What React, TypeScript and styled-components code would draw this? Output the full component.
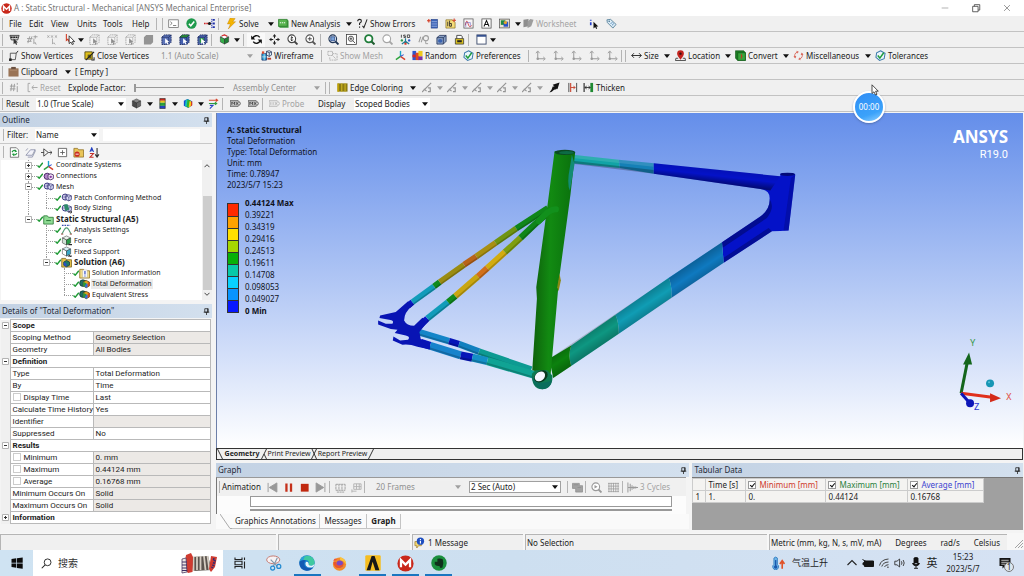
import React from "react";
import styled, { createGlobalStyle, css } from "styled-components";

const ui = '"Noto Sans", "Open Sans", "Noto Sans CJK SC", sans-serif';
const grid = 'Roboto, "Noto Sans", sans-serif';

const Global = createGlobalStyle`
  * { box-sizing: border-box; }
  html, body { margin: 0; padding: 0; }
  body { background: #f0f0f0; color: #1c1c1c; font: 8px/10px ${ui}; }
  button, select, input { font: inherit; color: inherit; margin: 0; }
`;

/* ---------- shell ---------- */

const Page = styled.div`
  display: flex;
  flex-direction: column;
  min-height: 100vh;
  position: relative;
  overflow: hidden;
`;

const TitleBar = styled.header`
  display: flex;
  align-items: center;
  height: 16px;
  padding: 0 3px 0 1px;
  gap: 2px;
  background: #fff;
  color: #777;
`;

const TitleText = styled.h1`
  flex: 1;
  margin: 0;
  font-size: 8px;
  font-weight: 400;
  white-space: nowrap;
`;

const WindowButton = styled.button`
  display: flex;
  align-items: center;
  justify-content: center;
  width: 29px;
  height: 15px;
  padding: 0;
  border: 0;
  background: none;
  color: #555;
`;

const Bars = styled.div`
  display: flex;
  flex-direction: column;
`;

const Bar = styled.div`
  display: flex;
  align-items: center;
  height: 16px;
  padding-left: 2px;
  border-bottom: 1px solid #c2c2c2;
  background: #f0f0f0;
  white-space: nowrap;
`;

const Grip = styled.span<{ $w: number }>`
  flex: none;
  width: ${(p) => p.$w}px;
  height: 12px;
  border-left: 1px solid #b4b4b4;
`;

const Gap = styled.span<{ $w: number }>`
  flex: none;
  width: ${(p) => p.$w}px;
`;

const Tool = styled.button<{ $w: number; $off?: boolean; $on?: boolean }>`
  flex: none;
  display: flex;
  align-items: center;
  gap: 2px;
  width: ${(p) => p.$w}px;
  height: 14px;
  padding: 0;
  border: 0;
  background: ${(p) => (p.$on ? "#f9f9f9" : "none")};
  color: ${(p) => (p.$off ? "#a3a3a3" : "#1c1c1c")};
  white-space: nowrap;
`;

const IconTool = styled(Tool)`
  justify-content: center;
`;

const BarLabel = styled.label<{ $w: number }>`
  flex: none;
  width: ${(p) => p.$w}px;
`;

const Combo = styled.span<{ $w: number; $white?: boolean; $border?: boolean }>`
  flex: none;
  position: relative;
  display: flex;
  align-items: center;
  width: ${(p) => p.$w}px;
  height: 12px;
  background: ${(p) => (p.$white ? "#fff" : "#efefef")};
  border: ${(p) => (p.$border ? "1px solid #a0a0a0" : "0")};
  svg {
    position: absolute;
    right: 2px;
    pointer-events: none;
  }
`;

const Select = styled.select<{ $off?: boolean }>`
  appearance: none;
  width: 100%;
  height: 100%;
  padding: 0 10px 0 1px;
  border: 0;
  background: none;
  opacity: 1;
  color: ${(p) => (p.$off ? "#8f8f8f" : "#1c1c1c")};
`;

const Range = styled.input`
  flex: none;
  appearance: none;
  width: 90px;
  height: 8px;
  margin-right: 8px;
  background: linear-gradient(#999, #999) center / 100% 1px no-repeat;
  &::-webkit-slider-thumb {
    appearance: none;
    width: 2px;
    height: 8px;
    background: #999;
  }
`;

/* ---------- icons ---------- */

const Svg = styled.svg<{ $s?: number }>`
  flex: none;
  display: block;
  width: ${(p) => p.$s ?? 11}px;
  height: ${(p) => p.$s ?? 11}px;
`;

const Caret = ({ off }: { off?: boolean }) => (
  <Svg $s={6} viewBox="0 0 6 6">
    <path d="M0 1.2H6L3 5Z" fill={off ? "#a0a0a0" : "#111"} />
  </Svg>
);

const cube = (a: string, b: string, c: string) => (
  <>
    <path d="M6 1 10.5 3.2 6 5.4 1.5 3.2Z" fill={a} stroke="#222" strokeWidth=".5" />
    <path d="M1.5 3.2 6 5.4V11L1.5 8.6Z" fill={b} stroke="#222" strokeWidth=".5" />
    <path d="M10.5 3.2 6 5.4V11L10.5 8.6Z" fill={c} stroke="#222" strokeWidth=".5" />
  </>
);

const selBox = (edge: string, fill: string) => (
  <>
    <path d="M1 3.5 3.5 1H11V9L8.5 11.5H1Z" fill={fill} stroke={edge} strokeDasharray="2 .6" />
    <path d="M1 3.5H8.5V11M8.5 3.5 11 1" fill="none" stroke={edge} strokeWidth=".8" />
    <path d="M4.5 4.5V10.5L6 9.2 7 11.6 8.2 11 7.1 8.7H9Z" fill={edge === "#a8a8a8" ? "#8e8e8e" : "#fff"} />
  </>
);

const lens = (stroke: string, inner?: React.ReactNode) => (
  <>
    <circle cx="5.2" cy="5.2" r="4.2" fill="#fff" stroke={stroke} strokeWidth="1.2" />
    <path d="M8.2 8.2 11.4 11.4" stroke={stroke} strokeWidth="2" />
    {inner}
  </>
);

const contour = (
  <>
    <path d="M2 3 6 1 11 3.5V8L7 11 2 8.5Z" fill="#1550d0" />
    <path d="M4 2.2 6.8 1.3 8.2 3.6 5 9.8 3.2 9Z" fill="#17c0c0" />
    <path d="M6 1.5 9.5 3 7.5 10.6 5 9.7Z" fill="#2fb52f" />
    <path d="M8.2 3.5 10 3.2 9.8 8.6 7.2 10.7Z" fill="#f3cf1c" />
    <path d="M10 4 11.2 3.6V8L9.6 9.2Z" fill="#e23a1c" />
  </>
);

const axis = (
  <>
    <path d="M6 7V1" stroke="#19a3c9" strokeWidth="1.5" />
    <path d="M6 7 1 10.5" stroke="#2aa33a" strokeWidth="1.5" />
    <path d="M6 7 11 10.5" stroke="#d6402a" strokeWidth="1.5" />
    <path d="M6 7 9.5 5" stroke="#2b4bd0" strokeWidth="1.1" />
  </>
);

const tick = <path d="M3 6 5.3 8.8 9.5 3" fill="none" stroke="#1f9c3c" strokeWidth="1.6" />;

const coord = (
  <>
    <path d="M3 2V9.5H10.5" fill="none" stroke="#9a9a9a" strokeWidth="1.1" />
    <path d="M1 3.5 3 1 5 3.5M9 7.6 11.2 9.5 9 11.4" fill="none" stroke="#9a9a9a" strokeWidth="1" />
    <circle cx="3" cy="9.5" r="1.4" fill="#9a9a9a" />
  </>
);

const meshed = (
  <>
    <circle cx="4.6" cy="5.5" r="3.3" fill="#e6e6fa" stroke="#33307c" strokeWidth="1" />
    <path d="M1.4 5.5H8M4.6 2.2V8.8" stroke="#33307c" strokeWidth=".6" />
    <path d="M5.5 4.2 8.5 3 11.3 4.2V8.2L8.5 9.7 5.5 8.2Z" fill="#d9dcf7" stroke="#29286c" strokeWidth=".8" />
    <path d="M5.5 4.2 8.5 5.6 11.3 4.2M8.5 5.6V9.7" fill="none" stroke="#29286c" strokeWidth=".6" />
  </>
);

const icons: Record<string, React.ReactNode> = {
  mech: (
    <>
      <circle cx="6" cy="6" r="5.7" fill="#c9281b" />
      <path d="M2.8 8.7V3.6L6 6.8 9.2 3.6V8.7" fill="none" stroke="#fff" strokeWidth="1.6" />
    </>
  ),
  console: (
    <>
      <rect x=".8" y="2" width="10.4" height="8.4" fill="#fff" stroke="#666" strokeWidth=".8" />
      <path d="M2.5 4 4.5 5.8 2.5 7.6M5.5 8.2H9" fill="none" stroke="#555" strokeWidth=".8" />
    </>
  ),
  ok: (
    <>
      <circle cx="6" cy="6" r="5.6" fill="#1f9a4c" />
      <path d="M3.2 6.2 5.2 8.4 9 3.8" fill="none" stroke="#fff" strokeWidth="1.7" />
    </>
  ),
  nodes: (
    <>
      <path d="M0 6H5" stroke="#d02a2a" strokeWidth="1.6" strokeDasharray="1.8 .7" />
      <path d="M8.5 1V11" stroke="#2233aa" strokeWidth="1" strokeDasharray="1.4 .8" />
      <path d="M9.4 1H11.8V3H9.4ZM9.4 5H11.8V7H9.4ZM9.4 9H11.8V11H9.4Z" fill="#2233aa" />
      <circle cx="6" cy="6" r="1.7" fill="#111" />
    </>
  ),
  bolt: <path d="M4.5 0 10 .6 7.5 4H10.5L2.5 12 4.8 6.5H1.5Z" fill="#f4b400" stroke="#b97700" strokeWidth=".4" />,
  analysis: (
    <>
      <path d="M.5 1.5H10L11.5 3V10.5H2L.5 9Z" fill="#3d9a3f" />
      <path d="M.5 1.5H10V9H.5Z" fill="#58b44f" stroke="#27702a" strokeWidth=".6" />
      <path d="M2 5.2H8.5" stroke="#fff" strokeDasharray="1.4 .8" />
    </>
  ),
  errors: (
    <>
      <path d="M.8 3.5Q.8 1.5 2.8 1.5 4.8 1.5 4.8 3.3 4.8 4.7 2.8 5.8V7.5M2.8 9.2V10.7" fill="none" stroke="#222" strokeWidth="1.2" />
      <path d="M6 8.6 7.5 10.5 11 1.5" fill="none" stroke="#222" strokeWidth="1.1" />
    </>
  ),
  chartIn: (
    <>
      <rect x="4.5" y="1.5" width="7" height="9.5" fill="#3c64b8" stroke="#223c80" strokeWidth=".6" />
      <path d="M5 4H11M5 6.5H11M5 9H11" stroke="#c9d7f5" strokeWidth=".6" />
      <path d="M0 3H4M2 1V5" stroke="#d2371f" strokeWidth="1.2" />
    </>
  ),
  label: (
    <>
      <path d="M1 2H8L11 5V11H1Z" fill="#f5dc7b" stroke="#7c6416" strokeWidth=".7" />
      <path d="M3 9V4M5 9V3M5 6H7V9H5" fill="none" stroke="#222" strokeWidth=".9" />
      <path d="M8 2.5H12M10 .5V4.5" stroke="#d2371f" strokeWidth="1" />
    </>
  ),
  sheetChart: (
    <>
      <rect x="1" y="1" width="10" height="10" fill="#f6f3f6" stroke="#555" strokeWidth=".8" />
      <path d="M2.5 8Q4 0 5.5 6T9.5 8" fill="none" stroke="#d23a3a" strokeWidth=".9" />
      <path d="M3 10V5H8V9" fill="none" stroke="#5b57bb" strokeWidth=".6" />
    </>
  ),
  letterA: (
    <>
      <rect x="1" y="1" width="10" height="10" fill="#fff" stroke="#444" strokeWidth=".8" />
      <path d="M3.2 9.2 6 2.8 8.8 9.2M4.3 7H7.7" fill="none" stroke="#111" strokeWidth="1.1" />
    </>
  ),
  picture: (
    <>
      <rect x=".6" y="1.2" width="10.8" height="9.6" fill="#e9e4d2" stroke="#555" strokeWidth=".8" />
      <path d="M2 2.5H7V7.5H2Z" fill="#1f8b3f" />
      <path d="M5 4H10V9.5H5Z" fill="#2a53c9" />
      <circle cx="7" cy="5" r="1.8" fill="#e8a32a" />
    </>
  ),
  worksheet: (
    <>
      <path d="M.5 2 6 1V9L.5 10Z" fill="#8e8e8e" />
      <path d="M5 4 8 1 11.5 2 9 9 5 11Z" fill="#9d9d9d" />
    </>
  ),
  info: (
    <>
      <path d="M3 4.5V8M3 1.8V3" stroke="#2340cc" strokeWidth="1.8" />
      <path d="M6 4V11.5L7.8 9.8 9 12 10 11.4 9 9.3H11.3Z" fill="#111" />
    </>
  ),
  tag: (
    <>
      <path d="M1 2 5 1.5 11 7 7.5 11 1.5 5Z" fill="#dcebf5" stroke="#4a7894" strokeWidth=".9" />
      <circle cx="3.5" cy="3.6" r=".9" fill="#4a7894" />
      <path d="M5 6.5 7 4.5M6.5 8 8.6 6" stroke="#3f7fb5" strokeWidth=".9" />
    </>
  ),
  named: (
    <>
      <path d="M1 1.5H11L9.5 6.5H2.5Z" fill="#ccc" stroke="#222" strokeWidth=".8" />
      <path d="M2 3.5H10" stroke="#222" strokeWidth="1.8" strokeDasharray="2 .6" />
      <path d="M5 5V11.2L6.6 9.9 7.8 12 8.9 11.3 7.8 9.3H9.8Z" fill="#333" />
    </>
  ),
  named2: <path d="M0 5H6M0 8H5M3 2.5 1 10M5.5 2.5 3.5 8M7 3H11.5M9 1.5V5M7.5 5V10.5L8.8 9.2 10 11.5" fill="none" stroke="#9d9d9d" strokeWidth="1" />,
  named3: <path d="M.5 1.5 2.5 4M2.5 1.5.5 4M4.5 1.5 6.5 4M6.5 1.5 4.5 4M8.5 1.5 11 4M11 1.5 8.5 4M6 5V11L7.5 9.5 9 11.5" fill="none" stroke="#a0a0a0" strokeWidth=".9" />,
  pick: (
    <>
      <path d="M1.5 0V7L3.2 5.7 4.5 8.5" fill="none" stroke="#d0402a" strokeWidth="1.2" />
      <path d="M4.5 2V10.5L6.5 8.8 8 11.7 9.2 11 8 8.3H10.5Z" fill="#fff" stroke="#222" strokeWidth=".9" />
    </>
  ),
  selOff: selBox("#a8a8a8", "#f5f5f5"),
  bodyOff: <path d="M1 3.5 3.5 1H11V9L8.5 11.5H1Z" fill="#949494" />,
  selBlue: selBox("#1c2c63", "#5d74b8"),
  selGreen: (
    <>
      {selBox("#1c2c63", "#4560b0")}
      <path d="M1 3.5 3.5 1H11L8.5 3.5Z" fill="#2a8f3d" stroke="#173d2c" strokeWidth=".5" />
    </>
  ),
  selTeal: (
    <>
      {selBox("#1c2c63", "#4d65ac")}
      <path d="M3 4.5H7.5V9.5H3Z" fill="#2d9a45" />
      <path d="M4.5 4.5V10.5L6 9.2 7 11.6 8.2 11 7.1 8.7H9Z" fill="#fff" />
    </>
  ),
  extend: (
    <>
      {cube("#fff", "#35b04c", "#1e7e34")}
      <path d="M3 2 6 1 9 2.5" fill="none" stroke="#d33" strokeWidth="1.2" />
    </>
  ),
  rotate: (
    <>
      <path d="M2 5A4.2 4.2 0 0 1 9.5 3.6M10 7A4.2 4.2 0 0 1 2.5 8.4" fill="none" stroke="#111" strokeWidth="1.5" />
      <path d="M.2 1.5V6H4.8ZM11.8 10.5V6H7.2Z" fill="#111" />
    </>
  ),
  pan: (
    <>
      <path d="M6 2V4.6M6 7.4V10M2 6H4.6M7.4 6H10" stroke="#222" strokeWidth="1.1" />
      <path d="M6 0 8 2.7H4ZM6 12 8 9.3H4ZM0 6 2.7 4V8ZM12 6 9.3 4V8Z" fill="#222" />
    </>
  ),
  zoomFit: lens("#444", <path d="M5.2 3V7.4M4 4.2 5.2 3 6.4 4.2M4 6.2 5.2 7.4 6.4 6.2" fill="none" stroke="#222" strokeWidth="1" />),
  zoomIn: lens("#555", <path d="M5.2 3V7.4M3 5.2H7.4" stroke="#444" strokeWidth="1" />),
  zoomBox: lens("#1f3556", <path d="M3 3H7.4V7.4H3Z" fill="#7aa3d8" stroke="#1d3d80" strokeWidth=".8" />),
  zoomRect: (
    <>
      <rect x=".5" y=".5" width="11" height="11" fill="#fff" stroke="#333" strokeWidth=".8" />
      <circle cx="5.4" cy="5.2" r="2.8" fill="none" stroke="#333" strokeWidth=".9" />
      <path d="M5.4 3.7V6.7M3.9 5.2H6.9M7.5 7.4 10 10" stroke="#333" strokeWidth=".9" />
    </>
  ),
  zoomGreen: (
    <>
      <circle cx="5.2" cy="5.2" r="4" fill="#fff" stroke="#1f7d3a" strokeWidth="2" />
      <path d="M8.2 8.2 11.4 11.4" stroke="#1f5d30" strokeWidth="2.2" />
    </>
  ),
  zoomOff: lens("#a6a6a6"),
  iso: (
    <>
      <path d="M1.5 .8V4M6 1.2H4V2.4H6V3.8H4M8 1H10.5V3.8H8Z" fill="none" stroke="#333" strokeWidth=".9" />
      <path d="M6 8V4.5M6 8 2 11M6 8 10 11" stroke="#1b7f97" strokeWidth="1.3" />
      <circle cx="2" cy="7" r="1.3" fill="#2a9a46" />
      <circle cx="10" cy="7" r="1.3" fill="#2c54c9" />
      <circle cx="6" cy="10.5" r="1.3" fill="#d33b2a" />
    </>
  ),
  look: (
    <>
      <path d="M1 9 3 3M3.5 9 5.5 3" stroke="#9c9c9c" strokeWidth="1.1" />
      <circle cx="8.6" cy="4.6" r="2.8" fill="none" stroke="#9c9c9c" strokeWidth="1.2" />
      <path d="M8.4 7V10.5H11" fill="none" stroke="#9c9c9c" />
    </>
  ),
  box3d: (
    <>
      <path d="M1 4 4 1.5H11V8L8 11H1Z" fill="#8aa0c4" stroke="#24365e" strokeWidth=".9" />
      <path d="M1 4H8V11M8 4 11 1.5" fill="none" stroke="#24365e" strokeWidth=".9" />
      <ellipse cx="4.6" cy="7.5" rx="2.4" ry="2" fill="#3a62b0" />
    </>
  ),
  lock: (
    <>
      <path d="M3 5V1.5H8L9 3V5" fill="#fff" stroke="#444" strokeWidth="1" />
      <path d="M1.5 5H10.5V11H1.5Z" fill="#d9c020" stroke="#333" strokeWidth=".8" />
      <path d="M3.5 6.8H8.5V9H3.5Z" fill="#222" />
    </>
  ),
  win: (
    <>
      <rect x="1" y="1" width="10" height="10" fill="#fff" stroke="#3b4a6b" />
      <path d="M1 2H11" stroke="#34508f" strokeWidth="2" />
    </>
  ),
  vertex: (
    <>
      <path d="M2.5 3.5H9L8 10.5H2.5Z" fill="none" stroke="#444" strokeWidth=".9" />
      <path d="M9 3.5 11 1" stroke="#222" strokeWidth="1" />
      <path d="M1.2 9.2H4V12H1.2Z" fill="#222" />
    </>
  ),
  closeVertex: (
    <>
      <path d="M1 2H9V10H1Z" fill="#e0c01c" stroke="#4a4110" strokeWidth=".9" />
      <path d="M4 5H8V9H4Z" fill="#5b5720" />
      <path d="M2 11 11 2M8 11H11V8" fill="none" stroke="#222" strokeWidth="1.1" />
    </>
  ),
  wire: (
    <>
      <path d="M1 4H6V11H1Z" fill="#2d9fd4" stroke="#1e3b70" strokeWidth=".9" />
      <path d="M1 1.5H3.5V4H1Z" fill="#e04a2c" />
      <path d="M6 1.5 9 .8 11.5 2V5.5L9 7 6 5.5ZM6 1.5 9 3 11.5 2M9 3V7" fill="#d8ecf7" stroke="#1f2e55" strokeWidth=".8" />
      <path d="M3.5 4V11M1 7.5H6" stroke="#fff" strokeWidth=".6" />
      <path d="M7 9.5H11" stroke="#b8402e" strokeWidth="2" />
    </>
  ),
  meshOff: <path d="M1 1.5H6V6H1ZM6 4H11V8M3 8V11H8M6 6 10 10M8 11H11V8" fill="none" stroke="#ababab" strokeWidth=".9" strokeDasharray="1.8 .7" />,
  axis,
  random: (
    <>
      <path d="M.5 1H4.5V11H.5Z" fill="#2b55cf" />
      <path d="M4 3H8V11H4Z" fill="#e2481f" />
      <path d="M7 1H11.5V7H7Z" fill="#efc81d" />
      <path d="M7 7H11.5V11H7Z" fill="#7d2fa6" />
      <path d="M.5 5H4V8H.5Z" fill="#d2262d" />
    </>
  ),
  prefs: (
    <>
      <path d="M6 .8 11 3.5 10 9.5 5 11.3 1 8 1.8 3Z" fill="#eaf4fb" stroke="#3a79ab" strokeWidth="1.1" />
      {tick}
    </>
  ),
  coord,
  size: <path d="M.8 6H11.2M3.2 3.5.8 6 3.2 8.5M8.8 3.5 11.2 6 8.8 8.5" fill="none" stroke="#222" strokeWidth="1" />,
  pin: (
    <>
      <path d="M1 9H3.5M8.5 9H11L11.5 11.5H.5L1 9" fill="none" stroke="#333" strokeWidth=".9" />
      <path d="M6 10.5Q2.3 6 2.3 4A3.7 3.7 0 0 1 9.7 4Q9.7 6 6 10.5Z" fill="#c4241e" />
      <circle cx="6" cy="4" r="1.3" fill="#3a0f0d" />
    </>
  ),
  convert: (
    <>
      <path d="M.5.8H9.5L11.5 3V11.5H3L.5 9Z" fill="#1b7b22" stroke="#0f4f15" strokeWidth=".6" />
      <path d="M3 3H11.3V11.3H3Z" fill="#36a63c" stroke="#0f4f15" strokeWidth=".6" />
      <path d="M7 4.5V9.5M7 6 8.4 7" stroke="#c4381f" strokeWidth="1" />
    </>
  ),
  misc: (
    <>
      <path d="M4.5 2.2A4.5 4.5 0 0 0 2.4 8.6M7.5 9.8A4.5 4.5 0 0 0 9.6 3.4" fill="none" stroke="#d96a5d" strokeWidth="1" />
      <path d="M3.8.8 6.4 2 4.3 4ZM8.2 11.2 5.6 10 7.7 8ZM.5 6.5H3.6L2.4 9.3ZM11.5 5.5H8.4L9.6 2.7Z" fill="#d96a5d" />
    </>
  ),
  clip: (
    <>
      <path d="M.5 2.5H11.5V11.5H.5Z" fill="#9a7456" />
      <path d="M3.5 1H8.5V3.5H3.5Z" fill="#6b5140" />
      <path d="M2 4.5H10" stroke="#b8957a" strokeWidth=".8" />
    </>
  ),
  hash: <path d="M1 4.5H7M1 7.5H7M3 2 2 10M6 2 5 10M9 1V3M9 4.5V11" stroke="#999" strokeWidth="1" />,
  reset: <path d="M3.5 1.5H1.2V10.5H3.5M11.5 6H5.5M7.5 3.8 5.2 6 7.5 8.2" fill="none" stroke="#a5a5a5" strokeWidth="1" />,
  edge: (
    <>
      <path d="M.5 1.5H11.5V10.5H.5Z" fill="#8c7b12" />
      <path d="M4.6 1.5H5.8V10.5H4.6ZM8.2 1.5H9.4V10.5H8.2Z" fill="#cdb624" />
      <path d="M.5 1.5H2V10.5H.5Z" fill="#c9a800" />
    </>
  ),
  slash: <path d="M0 11 10 1M2 7.5 5 10M6.5 6.5H9V10.5H6.5" fill="none" stroke="#959595" strokeWidth="1.3" />,
  probeArrow: <path d="M.5 11.5 3 8 4 5 7.5 4.5 11 1 8 8 5.5 8.5 3 10.5ZM4 3 11.5.5 9.2 8Z" fill="#111" />,
  thinA: (
    <>
      <path d="M2 1V11M10.5 1V11" stroke="#444" strokeWidth="1" />
      <path d="M4 1V11" stroke="#c8442f" strokeWidth="1.2" />
      <path d="M4 6H9M7 4.5 9 6 7 7.5" fill="none" stroke="#c8442f" strokeWidth="1" />
    </>
  ),
  thicken: (
    <>
      <path d="M1.2 1V11" stroke="#222" strokeWidth="1.2" />
      <path d="M9.5 1V11" stroke="#1f8a32" strokeWidth="3" />
      <path d="M2 6H8M4 4.5 2 6 4 7.5M6 4.5 8 6 6 7.5" fill="none" stroke="#222" strokeWidth=".9" />
    </>
  ),
  cubeDark: cube("#888", "#4a4a4a", "#666"),
  bands: (
    <>
      <path d="M3 .5H9V3H3Z" fill="#c8281b" />
      <path d="M3 3H9V5.2H3Z" fill="#e7c51c" />
      <path d="M3 5.2H9V8.6H3Z" fill="#2aa03c" />
      <path d="M3 8.6H9V11.5H3Z" fill="#2442c0" />
      <path d="M3 .5H9V11.5H3Z" fill="none" stroke="#222" strokeWidth=".6" />
    </>
  ),
  contour,
  vectors: (
    <>
      <path d="M1 2.5H10M8.5 1 10.5 2.5 8.5 4" fill="none" stroke="#d8472e" strokeWidth="1.2" />
      <path d="M1 6H9M7.5 4.5 9.5 6 7.5 7.5" fill="none" stroke="#2f9d3f" strokeWidth="1.2" />
      <path d="M2 11.5 5.5 8H2" fill="none" stroke="#2945c5" strokeWidth="1.2" />
    </>
  ),
  max: (
    <>
      <path d="M0 3H9L11.8 6 9 9H0Z" fill="#ccc" stroke="#333" strokeWidth=".8" />
      <path d="M2 7.5V4.5L3.5 6 5 4.5V7.5M6.5 4.5 9 7.5M9 4.5 6.5 7.5" fill="none" stroke="#222" strokeWidth=".8" />
    </>
  ),
  probe: (
    <>
      <path d="M0 3H9L11.8 6 9 9H0Z" fill="#eee" stroke="#a5a5a5" strokeWidth=".8" />
      <path d="M2 4.5V7.5M4.5 4.5V7.5M6.5 4.5 9 7.5M9 4.5 6.5 7.5" fill="none" stroke="#a5a5a5" strokeWidth=".8" />
    </>
  ),
  refresh: (
    <>
      <path d="M1.5.8H8L10.5 3.3V11.2H1.5Z" fill="#fff" stroke="#555" strokeWidth=".8" />
      <path d="M3.3 5.5Q5 2.8 7.5 4.2M8.6 6.8Q7 9.6 4.3 8.2" fill="none" stroke="#1f9a3d" strokeWidth="1.4" />
      <path d="M6.6 2.6 9 4.8 6.2 5.6ZM5.4 9.8 3 7.6 5.8 6.8Z" fill="#1f9a3d" />
    </>
  ),
  erase: <path d="M1 9 6 3H11L8 9ZM3 11H8L11 5V3M1 4 3 1.5" fill="#f2f2fa" stroke="#8a8fa8" strokeWidth=".9" />,
  filter: <path d="M0 6H3M3 2V10L8 6ZM8 6H12M10 4 12 6 10 8" fill="none" stroke="#333" strokeWidth=".9" />,
  plusBox: <path d="M1.5 1.5H10.5V10.5H1.5ZM6 3.5V8.5M3.5 6H8.5" fill="#fff" stroke="#555" strokeWidth=".9" />,
  folderNo: (
    <>
      <path d="M1 1.5H5L6 3H11.5V11H1Z" fill="#e9c558" stroke="#8b6a1b" strokeWidth=".8" />
      <circle cx="4.5" cy="7.8" r="2.8" fill="#c92c22" />
      <path d="M2.8 7.8H6.2" stroke="#fff" strokeWidth="1" />
    </>
  ),
  sort: (
    <>
      <path d="M1 5.3 3 .8 5 5.3M1.8 4H4.2" fill="none" stroke="#2340c0" strokeWidth="1.1" />
      <path d="M1 7H5L1 11.3H5" fill="none" stroke="#c4302a" strokeWidth="1.1" />
      <path d="M8.8 1V10M6.8 8 8.8 11 10.8 8" fill="none" stroke="#333" strokeWidth="1.2" />
    </>
  ),
  connect: (
    <>
      <circle cx="4.6" cy="5.8" r="3.4" fill="#b387c9" stroke="#432460" strokeWidth="1" />
      <path d="M5.5 4.2 8.5 3 11.3 4.2V8.2L8.5 9.7 5.5 8.2Z" fill="#efe4f5" stroke="#432460" strokeWidth=".9" />
      <circle cx="8.4" cy="6.4" r="1.3" fill="#8a3aa8" />
    </>
  ),
  meshed,
  sizing: (
    <>
      {meshed}
      <path d="M3 2 7 1 9 7 5 9Z" fill="#2d8a6a" />
      <path d="M8 10H12M10.5 8.5 12 10 10.5 11.5" fill="none" stroke="#222" strokeWidth=".9" />
    </>
  ),
  greenFolder: (
    <>
      <path d="M.8 2H4.8L6 3.6H11.2V11H.8Z" fill="#8fdc94" stroke="#2d7a38" strokeWidth=".9" />
      <path d="M3.5 7.2H8.5" stroke="#1f6b2c" strokeWidth="1" />
    </>
  ),
  settings: (
    <>
      <path d="M1 1.5H10" stroke="#3a4fae" strokeWidth="1.4" strokeDasharray="1.8 1" />
      <path d="M1 11 4 5.5Q6 3 8 5.5L11 11" fill="none" stroke="#4f9a72" strokeWidth="1.2" />
      <path d="M0 11H2.5M9.5 11H12" stroke="#a0463c" strokeWidth="1" />
    </>
  ),
  force: (
    <>
      {cube("#e9f3ec", "#cfe0d5", "#2b9c4a")}
      <path d="M8 10.5H12" stroke="#222" strokeWidth="1.3" />
    </>
  ),
  support: (
    <>
      {cube("#d8f0f7", "#fff", "#39a7c6")}
      <path d="M7.5 11H12M8.5 9.8 10.8 11.8" stroke="#222" strokeWidth="1" />
    </>
  ),
  solution: (
    <>
      <path d="M.8 1.5H5L6 3H11.5V11H.8Z" fill="#e4c24a" stroke="#735a12" strokeWidth=".8" />
      <path d="M3 5.5 6 3.8 9.3 5.5V9L6 10.6 3 9Z" fill="#1d7b66" stroke="#16313e" strokeWidth=".8" />
      <path d="M3 5.5 6 7V10.6L3 9Z" fill="#2b50c2" />
    </>
  ),
  solInfo: (
    <>
      <path d="M.8 1.5H5L6 3H11.5V11H.8Z" fill="#f0dc88" stroke="#8a6b18" strokeWidth=".8" />
      <path d="M4 2.2H9V10.2H4Z" fill="#fff" stroke="#999" strokeWidth=".4" />
      <path d="M6.5 3.2V7M6.5 8.2V9.4" stroke="#2340c0" strokeWidth="1.2" />
    </>
  ),
  result: (
    <>
      <circle cx="4.3" cy="5.6" r="3.6" fill="#1d6f68" stroke="#153a2a" strokeWidth=".8" />
      <path d="M4.6 4 7.8 2.6 11.4 4.4V8.6L8 10.6 4.6 8.6Z" fill="#e2a21f" stroke="#543d10" strokeWidth=".8" />
      <path d="M4.6 4 8 5.8V10.6L4.6 8.6Z" fill="#2a9a3c" />
      <path d="M6 9.4 8 10.6 9.5 9.7V6.5L8 6Z" fill="#3a6ad8" />
      <path d="M9.6 5V9.6L11.4 8.6V4.4Z" fill="#d6481f" />
    </>
  ),
  first: <path d="M1.2 1V11M10.8 1 2.5 6 10.8 11Z" fill="#989898" stroke="#989898" strokeWidth="1" />,
  pause: <path d="M2.5 1.5H5V10.5H2.5ZM7.5 1.5H10V10.5H7.5Z" fill="#c5301a" />,
  stop: <path d="M2 2H10.5V10.5H2Z" fill="#c1280f" />,
  last: <path d="M10.8 1V11M1.2 1 9.5 6 1.2 11Z" fill="#989898" stroke="#989898" strokeWidth="1" />,
  frames: <path d="M1 2.5H11M1 2.5V9M4.3 2.5V9M7.6 2.5V9M11 2.5V9M1 9H11M2 11H10" fill="none" stroke="#9c9c9c" strokeWidth="1" strokeDasharray="2.4 .5" />,
  frames2: <path d="M3 2H11V8H3ZM6 2V8M9 2V8M3 5H11M1 10H6M1 8V11.5" fill="none" stroke="#b2b2b2" strokeWidth="1" />,
  export: <path d="M.5 1.5H8V4H11.5V11H4V7H.5ZM2 3H6.5M6 6H10" fill="#a2a2a2" stroke="#8c8c8c" strokeWidth=".8" />,
  zoomPlay: lens("#999", <path d="M3.8 3.2 7.2 5.2 3.8 7.2Z" fill="#999" />),
  gridIc: <path d="M1 1V11M3.5 1V11M6 1V11M8.5 1V11M11 1V11M0 1.5H12M0 4.5H12M0 7.5H12M0 10.5H12" stroke="#9a9a9a" strokeWidth=".8" />,
  cycles: <path d="M1 .5V11.5M1 6H12M3.5 2V10M5.5 3.5V8.5M7.5 4.5V7.5M9.5 5V7" stroke="#9a9a9a" strokeWidth="1.1" />,
  message: (
    <>
      <path d="M1 5H8V9.5H5L3 12V9.5H1Z" fill="#f2d877" stroke="#96741b" strokeWidth=".7" />
      <circle cx="7" cy="4.5" r="4" fill="#1f4fc0" />
      <path d="M7 2.2V3.3M7 4V7" stroke="#fff" strokeWidth="1.2" />
    </>
  ),
  start: <path d="M.5 2 5.3 1.3V5.7H.5ZM6 1.2 11.7.4V5.7H6ZM.5 6.4H5.3V10.8L.5 10.1ZM6 6.4H11.7V11.7L6 10.9Z" fill="#0b0b0b" />,
  search: (
    <>
      <circle cx="7.2" cy="4.7" r="3.7" fill="none" stroke="#222" strokeWidth="1" />
      <path d="M4.5 7.4.8 11.2" stroke="#222" strokeWidth="1.1" />
    </>
  ),
  taskview: <path d="M1 .5V2.5H8V.5M1 11.5V9.5H8V11.5M1 4.3H8V7.7H1ZM10.5 .5V3M10.5 4.5V11.5" fill="none" stroke="#222" strokeWidth="1.1" />,
  snip: (
    <>
      <ellipse cx="5.4" cy="3.6" rx="4.9" ry="2.9" fill="#f7f2f4" stroke="#c4756c" strokeWidth=".7" />
      <path d="M8.5 2 5.5 8.5M3.5 3.5 8.5 8.5" stroke="#8298aa" strokeWidth=".9" />
      <circle cx="5" cy="9.8" r="1.5" fill="none" stroke="#2189d0" strokeWidth=".9" />
      <circle cx="9.6" cy="8.6" r="1.5" fill="none" stroke="#2189d0" strokeWidth=".9" />
    </>
  ),
  edgeApp: (
    <>
      <circle cx="6" cy="6" r="5.8" fill="#1b7fd0" />
      <path d="M.4 5A5.8 5.8 0 0 1 11.7 5Q12 8 9 8 7 8 7.4 6.4 7.6 4 5 3.8 2 3.6.4 5Z" fill="#3fc9a0" />
      <path d="M.4 5Q1.5 1 5.5.5 3 2 3.5 4Z" fill="#2a9ddc" />
      <path d="M.3 5Q2.5 3 5 4Q3 6 4.5 8.5 6.5 11 10.5 9.3 8.5 12 5 11.7 0 10.5.3 5Z" fill="#1459b3" />
      <path d="M5.2 5.2Q6.8 4.6 7.2 6.2 6.8 8.2 9.5 8 11 7.8 11.6 6.6 11.5 8 10.6 9 7 10.2 5.2 8 4.4 6.4 5.2 5.2Z" fill="#e8f4fb" />
    </>
  ),
  firefox: (
    <>
      <circle cx="6" cy="6.4" r="5.3" fill="#f38b2a" />
      <path d="M6.5.5Q11.5 2.5 11.4 7 9.5 3.5 6.5 3.6Z" fill="#fbc53c" />
      <path d="M1 4Q2 1.5 3 2.2L4.5 3Z" fill="#ef5a3a" />
      <circle cx="6.2" cy="6.4" r="2.8" fill="#7d4ac0" />
      <path d="M1 5Q2 11 7 9.2 9.6 8 9 5.5 8 8 5.4 7.5 3 7 3.4 4.6Z" fill="#e9552e" />
    </>
  ),
  ansysApp: (
    <>
      <rect x=".2" y=".2" width="11.6" height="11.6" rx="1" fill="#f5bd20" />
      <path d="M1.2 11.5 5 .8H7.2L10.8 11.5H7.8L5.7 5 4 11.5Z" fill="#171717" />
    </>
  ),
  evernote: (
    <>
      <circle cx="6" cy="6" r="5.8" fill="#1b8f3e" />
      <path d="M2.8 5H4.8V2.8Q7 2.2 8.8 3.2 9.8 6 8.6 9.4 6.4 10.4 6.4 8.2 3.6 8.6 2.8 7Z" fill="#10301c" />
    </>
  ),
  weather: (
    <>
      <path d="M2.5 1.8Q4 0 5.5 1.8V7.2Q7 8.2 6.4 10 5.8 11.8 4 11.8 2.2 11.8 1.6 10 1 8.2 2.5 7.2Z" fill="#6fb4e8" stroke="#2c78bd" strokeWidth=".7" />
      <path d="M4 3.5V9" stroke="#1a58ae" strokeWidth="1.2" />
      <circle cx="4" cy="9.4" r="1.5" fill="#1a58ae" />
      <path d="M9.6 11V4.5M7.6 6.8 9.6 4 11.6 6.8" fill="none" stroke="#e0532a" strokeWidth="1.4" />
    </>
  ),
  up: <path d="M1.5 8 6 3.5 10.5 8" fill="none" stroke="#222" strokeWidth="1.1" />,
  battery: <path d="M2.5 4H11.5V9.5H2.5ZM1 5.8H2.5V7.8H1ZM.5 2.5 4 4.5" fill="#151515" stroke="#151515" strokeWidth="1" />,
  wifi: <path d="M1.5 8.5Q3 2.5 10.5 2M3.8 9.5Q5 5.3 10.5 5M6.5 10Q7.3 7.8 10.5 7.7M9 10.2H10.8" fill="none" stroke="#444" strokeWidth="1" />,
  sound: <path d="M.8 4.2H3L5.6 2V10L3 7.8H.8ZM7.4 4.3Q8.6 6 7.4 7.7M9.2 3Q11.2 6 9.2 9" fill="none" stroke="#333" strokeWidth=".9" />,
  mic: <path d="M4 1Q6 0 8 1V6.5Q6 8.2 4 6.5ZM2.5 6Q3 8.8 6 8.8 9 8.8 9.5 6M6 9V11.3M4 11.3H8" fill="#111" stroke="#111" strokeWidth=".9" />,
  notes: (
    <>
      <path d="M.5 1H11.5V9H6L3.5 11.5V9H.5Z" fill="#151515" />
      <path d="M2.3 3.3H9.7M2.3 5.3H9.7M2.3 7.2H6" stroke="#fff" strokeWidth=".7" />
    </>
  ),
  min: <path d="M2 6H10" stroke="#999" strokeWidth=".9" />,
  restore: <path d="M2 4H8.5V10.5H2ZM4 4V2H10.5V8.5H8.5" fill="none" stroke="#444" strokeWidth="1" />,
  close: <path d="M2.5 2.5 9.5 9.5M9.5 2.5 2.5 9.5" stroke="#777" strokeWidth=".9" />,
};

const Icon = ({ n, s }: { n: string; s?: number }) => (
  <Svg $s={s} viewBox="0 0 12 12" aria-hidden="true">
    {icons[n]}
  </Svg>
);

const Ic = ({ n, w = 18, on }: { n: string; w?: number; on?: boolean }) => (
  <IconTool type="button" aria-label={n} $w={w} $on={on}>
    <Icon n={n} />
  </IconTool>
);

const Drop = ({ w = 12, off }: { w?: number; off?: boolean }) => (
  <IconTool type="button" aria-label="More" $w={w}>
    <Caret off={off} />
  </IconTool>
);

const Txt = ({ n, w, off, children }: { n?: string; w: number; off?: boolean; children: React.ReactNode }) => (
  <Tool type="button" $w={w} $off={off}>
    {n && <Icon n={n} />}
    {children}
  </Tool>
);

type PickProps = { label: string; value: string; w: number; off?: boolean; border?: boolean; id?: string };
const Pick = ({ label, value, w, off, border, id }: PickProps) => (
  <Combo $w={w} $white={!off} $border={border}>
    <Select id={id} aria-label={label} $off={off} defaultValue={value}>
      <option>{value}</option>
    </Select>
    <Caret off={off} />
  </Combo>
);

/* ---------- work area ---------- */

const Work = styled.main`
  flex: 1;
  display: grid;
  grid-template-columns: 212px minmax(0, 1fr);
  gap: 4px;
  padding: 1px 1px 3px 0;
  background: #f4f4f4;
`;

const Side = styled.aside`
  display: flex;
  flex-direction: column;
  gap: 4px;
`;

const Panel = styled.section`
  display: flex;
  flex-direction: column;
  min-width: 0;
`;

const PanelHead = styled.h2`
  flex: none;
  display: flex;
  align-items: center;
  justify-content: space-between;
  height: 14px;
  margin: 0;
  padding: 0 2px 0 2px;
  background: linear-gradient(90deg, #c3d2e4, #d3e0ee);
  color: #1f2a38;
  font-size: 8px;
  font-weight: 400;
`;

const Head = ({ children }: { children: React.ReactNode }) => (
  <PanelHead>
    {children}
    <Svg $s={7} viewBox="0 0 10 10">
      <path d="M2.5 1H7.5V6H2.5ZM1 6H9M5 6V10M6.4 1V6" fill="none" stroke="#222" strokeWidth="1.1" />
    </Svg>
  </PanelHead>
);

const FilterBar = styled.div`
  display: flex;
  align-items: center;
  height: 17px;
  padding-left: 3px;
  border-bottom: 1px solid #c8c8c8;
`;

const IconBar = styled(FilterBar)`
  height: 16px;
  border-bottom: 0;
`;

const FilterInput = styled.input`
  width: 97px;
  height: 12px;
  margin-left: 4px;
  padding: 0 2px;
  border: 0;
  background: #fff;
`;

const TreeBox = styled.div`
  flex: none;
  display: flex;
  height: 140px;
  margin-left: 1px;
  background: #fff;
`;

const TreeList = styled.ul`
  flex: 1;
  display: flex;
  flex-direction: column;
  margin: 0;
  padding: 0 0 0 18px;
  list-style: none;
`;

const Node = styled.li<{ $bold?: boolean }>`
  flex: 1 1 0;
  display: flex;
  align-items: center;
  min-height: 0;
  font-size: ${(p) => (p.$bold ? 8 : 7)}px;
  font-weight: ${(p) => (p.$bold ? 700 : 400)};
  white-space: nowrap;
`;

const NodeText = styled.span<{ $sel?: boolean }>`
  padding: 0 1px;
  background: ${(p) => (p.$sel ? "#ebebeb" : "none")};
`;

const NodeIcon = styled.span`
  display: flex;
  align-items: center;
  width: 18px;
  height: 10px;
`;

const Guide = styled.span<{ $kind: string }>`
  align-self: stretch;
  position: relative;
  display: flex;
  align-items: center;
  width: 18px;
  padding-left: 6px;
  &::before {
    content: "";
    position: absolute;
    left: 9px;
    top: 0;
    height: ${(p) => (p.$kind === "l" ? "50%" : "100%")};
    border-left: ${(p) => (p.$kind === " " ? "0" : "1px dotted #9a9a9a")};
  }
  &::after {
    content: "";
    position: absolute;
    left: 9px;
    right: 0;
    top: 50%;
    border-top: ${(p) => (p.$kind === " " || p.$kind === "v" ? "0" : "1px dotted #9a9a9a")};
  }
`;

const Expander = styled.button`
  position: relative;
  z-index: 1;
  display: flex;
  width: 7px;
  height: 7px;
  padding: 0;
  border: 0;
  background: #fff;
`;

const Expand = ({ open }: { open: boolean }) => (
  <Expander type="button" aria-label={open ? "Collapse" : "Expand"}>
    <Svg $s={7} viewBox="0 0 7 7">
      <path d="M.5.5H6.5V6.5H.5Z" fill="#fff" stroke="#aaa" strokeWidth=".9" />
      <path d={open ? "M2 3.5H5" : "M2 3.5H5M3.5 2V5"} stroke="#333" strokeWidth="1" />
    </Svg>
  </Expander>
);

const Scroll = styled.div`
  display: flex;
  flex-direction: column;
  align-items: center;
  justify-content: space-between;
  width: 10px;
  padding: 3px 0;
  background: #f0f0f0;
`;

const Thumb = styled.div`
  width: 9px;
  height: 94px;
  margin-top: 25px;
  background: #cdcdcd;
`;

type TreeRow = { g: string; open?: boolean; icon: string; text: string; bold?: boolean; sel?: boolean };
const tree: TreeRow[] = [
  { g: "t", open: false, icon: "axis", text: "Coordinate Systems" },
  { g: "t", open: false, icon: "connect", text: "Connections" },
  { g: "t", open: true, icon: "meshed", text: "Mesh" },
  { g: "vt", icon: "meshed", text: "Patch Conforming Method" },
  { g: "vl", icon: "sizing", text: "Body Sizing" },
  { g: "l", open: true, icon: "greenFolder", text: "Static Structural (A5)", bold: true },
  { g: " t", icon: "settings", text: "Analysis Settings" },
  { g: " t", icon: "force", text: "Force" },
  { g: " t", icon: "support", text: "Fixed Support" },
  { g: " l", open: true, icon: "solution", text: "Solution (A6)", bold: true },
  { g: "  t", icon: "solInfo", text: "Solution Information" },
  { g: "  t", icon: "result", text: "Total Deformation", sel: true },
  { g: "  l", icon: "result", text: "Equivalent Stress" },
];

const Outline = () => (
  <Panel>
    <Head>Outline</Head>
    <FilterBar>
      <Grip $w={4} />
      <BarLabel $w={28} htmlFor="filter">Filter:</BarLabel>
      <Pick id="filter" label="Filter" value="Name" w={64} />
      <FilterInput aria-label="Filter text" />
    </FilterBar>
    <IconBar>
      <Grip $w={3} />
      {["refresh", "erase", "filter", "plusBox", "folderNo", "sort"].map((n) => (
        <Ic key={n} n={n} w={16} />
      ))}
    </IconBar>
    <TreeBox>
      <TreeList>
        {tree.map((r) => (
          <Node key={r.text} $bold={r.bold}>
            {r.g.split("").map((k, i) => (
              <Guide key={i} $kind={k}>
                {i === r.g.length - 1 && r.open !== undefined && <Expand open={r.open} />}
              </Guide>
            ))}
            <NodeIcon>
              <Svg $s={6} viewBox="0 0 6 6">
                <path d="M.5 3.5 2.2 5.2 5.8.8" fill="none" stroke="#1e9a35" strokeWidth="1.4" />
              </Svg>
              <Icon n={r.icon} />
            </NodeIcon>
            <NodeText $sel={r.sel}>{r.text}</NodeText>
          </Node>
        ))}
      </TreeList>
      <Scroll>
        <Svg $s={6} viewBox="0 0 6 6"><path d="M.5 4.2 3 1.7 5.5 4.2" fill="none" stroke="#444" /></Svg>
        <Thumb />
        <Svg $s={6} viewBox="0 0 6 6"><path d="M.5 1.8 3 4.3 5.5 1.8" fill="none" stroke="#444" /></Svg>
      </Scroll>
    </TreeBox>
  </Panel>
);

const DetailsTable = styled.table`
  width: 210px;
  margin: 1px 0 0 1px;
  border-collapse: collapse;
  table-layout: fixed;
  background: #fff;
  font-family: ${grid};
`;

const Gutter = styled.td`
  width: 9px;
  padding: 0;
  background: #f0f0f0;
  button { margin: 0 auto; }
`;

const cell = css`
  height: 12px;
  padding: 0 2px;
  border: 1px solid #b9b9b9;
  text-align: left;
  font-weight: 400;
  line-height: 10px;
  white-space: nowrap;
`;

const GroupCell = styled.th`
  ${cell}
  font-weight: 700;
`;

const NameCell = styled.th`
  ${cell}
  width: 83px;
`;

const ValueCell = styled.td<{ $ro?: boolean }>`
  ${cell}
  background: ${(p) => (p.$ro ? "#ece9e6" : "#fff")};
`;

const Tick = styled.input`
  appearance: none;
  position: relative;
  width: 8px;
  height: 8px;
  margin: 0 3px 0 0;
  border: 1px solid #ccc;
  background: #fff;
  vertical-align: middle;
  &:checked { border-color: #999; }
  &:checked::after {
    content: "";
    position: absolute;
    left: 2px;
    top: 0;
    width: 2px;
    height: 4px;
    border: solid #111;
    border-width: 0 1px 1px 0;
    transform: rotate(40deg);
  }
`;

type Detail = { group?: string; closed?: boolean; name?: string; value?: string; ro?: boolean; tick?: boolean };
const details: Detail[] = [
  { group: "Scope" },
  { name: "Scoping Method", value: "Geometry Selection", ro: true },
  { name: "Geometry", value: "All Bodies", ro: true },
  { group: "Definition" },
  { name: "Type", value: "Total Deformation" },
  { name: "By", value: "Time" },
  { name: "Display Time", value: "Last", tick: true },
  { name: "Calculate Time History", value: "Yes" },
  { name: "Identifier", value: "", ro: true },
  { name: "Suppressed", value: "No" },
  { group: "Results" },
  { name: "Minimum", value: "0. mm", ro: true, tick: true },
  { name: "Maximum", value: "0.44124 mm", ro: true, tick: true },
  { name: "Average", value: "0.16768 mm", ro: true, tick: true },
  { name: "Minimum Occurs On", value: "Solid", ro: true },
  { name: "Maximum Occurs On", value: "Solid", ro: true },
  { group: "Information", closed: true },
];

const Details = () => (
  <Panel>
    <Head>Details of "Total Deformation"</Head>
    <DetailsTable>
      <colgroup>
        <col style={{ width: 9 }} />
        <col style={{ width: 83 }} />
        <col />
      </colgroup>
      <tbody>
        {details.map((d) =>
          d.group ? (
            <tr key={d.group}>
              <Gutter><Expand open={!d.closed} /></Gutter>
              <GroupCell colSpan={2} scope="colgroup">{d.group}</GroupCell>
            </tr>
          ) : (
            <tr key={d.name}>
              <Gutter />
              <NameCell scope="row">
                {d.tick ? <label><Tick type="checkbox" />{d.name}</label> : d.name}
              </NameCell>
              <ValueCell $ro={d.ro}>{d.value}</ValueCell>
            </tr>
          )
        )}
      </tbody>
    </DetailsTable>
  </Panel>
);

const Center = styled.div`
  display: flex;
  flex-direction: column;
  min-width: 0;
`;

const Viewport = styled.section`
  flex: 1;
  position: relative;
  min-height: 334px;
  padding: 11px 10px;
  border-left: 1px solid #6d7fa8;
  background: linear-gradient(#648eea, #b3c8f5 52%, #fff);
  color: #10131c;
`;

const Scene = styled.svg`
  position: absolute;
  inset: 0;
  width: 100%;
  height: 100%;
`;

const Caption = styled.div`
  position: relative;
  line-height: 11px;
  p { margin: 0; }
`;

const Legend = styled.div`
  position: relative;
  display: flex;
  align-items: flex-start;
  gap: 6px;
  margin-top: 7px;
`;

const Swatches = styled.div`
  width: 12px;
  margin-top: 6px;
  border: 1px solid #333;
`;

const Swatch = styled.div<{ $c: string }>`
  height: 12px;
  background: ${(p) => p.$c};
  border-top: 1px solid #333;
  &:first-child { border-top: 0; }
`;

const LegendValues = styled.ol`
  margin: 0;
  padding: 0;
  list-style: none;
  li { height: 12px; line-height: 12px; }
  li:first-child, li:last-child { font-weight: 700; }
`;

const Brand = styled.div`
  position: absolute;
  top: 13px;
  right: 15px;
  color: #fff;
  text-align: right;
  strong { display: block; font: 700 17px/22px ${ui}; }
  span { display: block; font: 11px/14px ${grid}; }
`;

const scale = ["#ff2a00", "#ffa200", "#ffe000", "#a6d600", "#08b008", "#08c9a8", "#08d0ff", "#0894ff", "#0818ff"];
const values = ["0.44124 Max", "0.39221", "0.34319", "0.29416", "0.24513", "0.19611", "0.14708", "0.098053", "0.049027", "0 Min"];

const Tube = ({ pts, colors, w }: { pts: number[][]; colors: string[]; w: number }) => (
  <>
    {colors.map((c, i) => (
      <path key={c + i} d={`M${pts[i]}L${pts[i + 1]}`} stroke={c} strokeWidth={w} fill="none" />
    ))}
    <path
      d={`M${pts.map((p) => p.join(" ")).join("L")}`}
      stroke="#000"
      strokeOpacity=".2"
      strokeWidth={w / 4}
      transform={`translate(2 ${w / 2.8})`}
      fill="none"
    />
  </>
);

const Frame = () => (
  <Scene viewBox="216 113 807 334" aria-label="Bicycle frame deformation plot">
    <defs>
      <linearGradient id="seat" x1="0" x2="1" y1="0" y2="0.08">
        <stop offset="0" stopColor="#0d5a0a" />
        <stop offset=".45" stopColor="#128a12" />
        <stop offset="1" stopColor="#0a6f0d" />
      </linearGradient>
      <linearGradient id="shade" gradientUnits="userSpaceOnUse" x1="820" y1="460" x2="858" y2="518">
        <stop offset="0" stopColor="#000" stopOpacity=".22" />
        <stop offset=".45" stopColor="#000" stopOpacity=".02" />
        <stop offset="1" stopColor="#000" stopOpacity=".28" />
      </linearGradient>
      <linearGradient id="shadeTop" gradientUnits="userSpaceOnUse" x1="960" y1="74" x2="955" y2="118">
        <stop offset="0" stopColor="#000" stopOpacity=".1" />
        <stop offset=".5" stopColor="#000" stopOpacity="0" />
        <stop offset="1" stopColor="#000" stopOpacity=".4" />
      </linearGradient>
    </defs>
    <g transform="translate(370 140) scale(.3333)">
      {/* top tube */}
      <path d="M606 42 745 57 748 82 606 68Z" fill="#12a3a6" />
      <path d="M745 57 850 68 850 99 748 82Z" fill="#1580b6" />
      <path d="M606 42 850 68 850 78 606 52Z" fill="#fff" opacity=".12" />
      <path d="M606 60 850 88V99L606 69Z" fill="#000" opacity=".25" />
      {/* head tube and its joints */}
      <path d="M850 68 1230 107V99Q1252 94 1275 101L1255 270Q1230 272 1205 272L1060 367 1055 305 1170 228Q1200 205 1198 175 1200 150 1170 145L850 99Z" fill="#0412c8" />
      <path d="M850 68 1230 107 1200 150 1170 145 850 99Z" fill="url(#shadeTop)" />
      <path d="M1055 305 1170 228Q1200 205 1198 175 1215 200 1190 232L1057 322Z" fill="#020763" opacity=".55" />
      <path d="M1205 272 1060 367V352L1195 262Z" fill="#020763" opacity=".5" />
      <path d="M1262 112 1275 103 1255 270H1240Z" fill="#020a8c" opacity=".5" />
      <ellipse cx="1252" cy="101" rx="22" ry="5" fill="#020a78" />
      {/* down tube */}
      <path d="M1055 305 1060 367 903 472Q905 435 895 412Z" fill="#0f7cc4" />
      <path d="M895 412Q905 435 903 472L745 580Q745 545 735 523Z" fill="#10a0b8" />
      <path d="M735 523Q745 545 745 580L602 677Q592 645 602 615Z" fill="#0e9a84" />
      <path d="M602 615Q592 645 602 677L548 713 536 655Z" fill="#0c840e" />
      <path d="M1055 305 1060 367 548 713 536 655Z" fill="url(#shade)" />
      {/* chain stays */}
      <Tube w={20} pts={[[140, 574], [235, 602], [265, 611], [325, 634], [482, 688]]} colors={["#1485c8", "#0716b8", "#1280bf", "#0d9a92"]} />
      <Tube w={24} pts={[[150, 607], [178, 616], [270, 645], [305, 652], [350, 662], [492, 704]]} colors={["#0a18c4", "#1783cc", "#0716b8", "#148fc6", "#10a394"]} />
      {/* seat stays, far side then near side */}
      <Tube w={18} pts={[[112, 496], [125, 485], [190, 438], [207, 425], [280, 373], [317, 348], [375, 307], [437, 264], [532, 202]]} colors={["#0a18c4", "#129cba", "#0f8a1c", "#9a8c12", "#b8641a", "#a88f12", "#6f9410", "#0f861a"]} />
      <Tube w={19} pts={[[130, 572], [170, 534], [232, 485], [254, 467], [322, 408], [350, 383], [403, 335], [450, 292], [505, 240], [545, 207]]} colors={["#0a18c4", "#129cba", "#0f8a1c", "#c9a610", "#d2701a", "#d2ac10", "#7f9e10", "#0f861a", "#0f861a"]} />
      {/* dropouts */}
      <path d="M28 525 75 515 112 482 126 495Q100 515 100 540 108 556 130 556L155 532 170 545 146 575 150 596 178 606V627L140 619Q115 610 95 613L66 600 68 588 88 600 112 598Q120 588 105 585L72 578 80 568 60 566 22 552V540L45 550H65Q72 540 55 538L26 533Z" fill="#0814b4" />
      {/* seat tube */}
      <path d="M552 32 530 200 497 440 499 475 485 690 540 705 565 420 600 160 614 34Z" fill="url(#seat)" />
      <path d="M604 42 612 70 598 150Q588 130 598 80Z" fill="#128c74" />
      <path d="M567 400 571 420 564 452 560 440Z" fill="#8a8a14" />
      <ellipse cx="583" cy="35" rx="31" ry="8" fill="#0a4a22" />
      <ellipse cx="588" cy="36" rx="22" ry="5" fill="#0c6b45" />
      <path d="M505 242Q535 205 556 206" fill="none" stroke="#12901c" strokeWidth="18" strokeLinecap="round" />
      {/* bottom bracket */}
      <path d="M484 700Q482 745 515 747 546 744 546 706L530 690H495Z" fill="#0d7a52" />
      <path d="M484 706Q500 740 545 720 540 746 515 747 486 742 484 706Z" fill="#0a6e5c" />
      <ellipse cx="511" cy="708" rx="22" ry="16" transform="rotate(-35 511 708)" fill="#06381c" />
      <ellipse cx="508" cy="708" rx="17" ry="13" transform="rotate(-40 508 708)" fill="#f4f7ff" />
    </g>
    {/* orientation triad */}
    <path d="M961 393 967 363" stroke="#14661c" strokeWidth="3" />
    <path d="M969 352 972 364H963Z" fill="#14661c" />
    <path d="M961 393 992 397" stroke="#e0301c" strokeWidth="3" />
    <path d="M1001 398 990 402V393Z" fill="#d42a18" />
    <path d="M961 393 969 402" stroke="#0c16b8" strokeWidth="3" />
    <circle cx="970" cy="403" r="4" fill="#0c16b8" />
    <circle cx="990" cy="383" r="4" fill="#1796b4" />
    <circle cx="989" cy="382" r="1" fill="#5cc3d8" />
    <g fontFamily="Roboto, sans-serif" fontSize="9">
      <text x="970" y="346" fill="#3d9a50">Y</text>
      <text x="1006" y="400" fill="#e05a50">X</text>
      <text x="974" y="410" fill="#2a36d0">Z</text>
    </g>
  </Scene>
);

const ViewTabs = styled.div`
  display: flex;
  align-items: stretch;
  height: 12px;
  border: 1px solid #333;
  background: #f0f0f0;
`;

const ViewTab = styled.button<{ $w: number; $on?: boolean }>`
  display: flex;
  align-items: center;
  justify-content: center;
  width: ${(p) => p.$w}px;
  padding: 0;
  border: 0;
  background: none;
  font-weight: ${(p) => (p.$on ? 700 : 400)};
  font-size: 7px;
  white-space: nowrap;
`;

const Slant = ({ d }: { d: string }) => (
  <svg width="6" height="10" viewBox="0 0 6 10" aria-hidden="true">
    <path d={d} fill="none" stroke="#222" strokeWidth=".9" />
  </svg>
);

const Lower = styled.div`
  display: grid;
  grid-template-columns: minmax(0, 474fr) minmax(0, 331fr);
  gap: 3px;
  margin-top: 3px;
  height: 67px;
`;

const GraphBody = styled.div`
  display: flex;
  flex-direction: column;
  height: 37px;
  margin-right: 3px;
  border-left: 1px solid #777;
  border-top: 1px solid #999;
  background: #fcfcfc;
`;

const GraphTools = styled(Bar)`
  height: 18px;
  border: 0;
  overflow: hidden;
`;

const Track = styled.div`
  height: 11px;
  margin: 0 14px 0 33px;
  border: 1px solid #999;
  background: #fff;
`;

const TrackLine = styled.div`
  height: 2px;
  margin: 2px 14px 0 33px;
  background: #999;
`;

const LowerTabs = styled.div`
  display: flex;
  height: 15px;
  padding-left: 4px;
  background: #fafafa;
`;

const LowerTab = styled(ViewTab)`
  font-size: 8px;
  border-right: 1px solid #c4c4c4;
  border-bottom: 1px solid #c4c4c4;
`;

const Tabular = styled.div`
  flex: 1;
  border-top: 1px solid #777;
  background: #a0a0a0;
`;

const DataTable = styled.table`
  border-collapse: collapse;
  table-layout: fixed;
  width: 291px;
  background: #f4f3f1;
  th, td {
    height: 12px;
    padding: 0 2px;
    border: 1px solid #ccc;
    font-weight: 400;
    text-align: left;
    white-space: nowrap;
    line-height: 10px;
  }
`;

const ColHead = styled.th<{ $c?: string }>`
  color: ${(p) => p.$c ?? "#222"};
`;

const columns = [
  { name: "Minimum [mm]", c: "#cf3a2c", v: "0." },
  { name: "Maximum [mm]", c: "#27803a", v: "0.44124" },
  { name: "Average [mm]", c: "#3a3fd0", v: "0.16768" },
];

/* ---------- bottom bars ---------- */

const Status = styled.footer`
  display: grid;
  grid-template-columns: 276px 132px 111px 1fr 238px 15px;
  gap: 2px;
  height: 17px;
  padding-top: 1px;
  background: #f7f7f7;
`;

const StatusCell = styled.div`
  display: flex;
  align-items: center;
  gap: 3px;
  padding-left: 1px;
  border: 1px solid #b5b5b5;
  border-width: 1px 0 0 1px;
  background: #f0f0f0;
  white-space: nowrap;
`;

const Units = styled(StatusCell)`
  justify-content: space-between;
  padding-right: 7px;
`;

const Taskbar = styled.nav`
  display: flex;
  align-items: stretch;
  height: 26px;
  background: linear-gradient(90deg, #cfe3f2, #cddff0 50%, #d6e2f3);
`;

const TaskButton = styled.button<{ $w?: number; $run?: boolean }>`
  display: flex;
  align-items: center;
  justify-content: center;
  width: ${(p) => p.$w ?? 33}px;
  padding: 0;
  border: 0;
  background: ${(p) =>
    p.$run ? "linear-gradient(#1a76c0, #1a76c0) center bottom / 27px 2px no-repeat" : "none"};
`;

const InputMode = styled(TaskButton)`
  font-size: 11px;
`;

const SearchBox = styled.label`
  display: flex;
  align-items: center;
  gap: 6px;
  width: 190px;
  padding: 0 5px 0 8px;
  background: #fff;
  input {
    flex: 1;
    min-width: 0;
    padding: 0;
    border: 0;
    background: none;
    font-size: 10px;
    line-height: 14px;
  }
  input::placeholder { color: #333; opacity: 1; }
`;

const Spacer = styled.div`
  flex: 1;
`;

const Weather = styled.button`
  display: flex;
  align-items: center;
  gap: 7px;
  width: 71px;
  padding: 0;
  border: 0;
  background: none;
  font-size: 9px;
  white-space: nowrap;
`;

const Clock = styled.time`
  display: flex;
  flex-direction: column;
  justify-content: center;
  width: 46px;
  text-align: center;
  line-height: 12px;
`;

const Notify = styled(TaskButton)`
  position: relative;
`;

const Count = styled.span`
  position: absolute;
  left: 18px;
  top: 12px;
  width: 10px;
  height: 10px;
  border: 1px solid #777;
  border-radius: 50%;
  background: #dfe6ef;
  line-height: 8px;
`;

const Accordion = () => (
  <svg width="37" height="21" viewBox="0 0 37 21" aria-hidden="true">
    <path d="M10 4 27 3 31 17 12 18Z" fill="#5a534d" />
    <path d="M12.5 4V18M16 3V17M19.5 3V17M23 3 24.5 17M26.5 3 28.5 17" stroke="#d5cdc2" strokeWidth="1.8" />
    <path d="M5 2 10 0 12 4 11.5 19 7 20 3 16Z" fill="#cf3b30" />
    <path d="M1 6 5 5 6 19 1 20Z" fill="#efe9e6" stroke="#4b3a63" strokeWidth=".8" />
    <path d="M1 9H6M1 12H6M1 15H6M1 17.5H6" stroke="#3f2f63" strokeWidth="1.2" />
    <path d="M30 3 36 4 34 14 30 19 28 16Z" fill="#cf3b30" />
    <path d="M32 6 34 6.5 32.5 12 31 15" fill="none" stroke="#322c74" strokeWidth="2.2" strokeDasharray="1.5 1" />
  </svg>
);

const Recorder = styled.div`
  position: absolute;
  top: 91px;
  right: 139px;
  display: flex;
  align-items: center;
  justify-content: center;
  width: 32px;
  height: 32px;
  border: 2px solid #fff;
  border-radius: 50%;
  background: linear-gradient(160deg, #2f8df5, #3ba2fa 70%, #8fd0ff);
  box-shadow: 0 1px 2px rgba(60, 80, 120, 0.5);
  color: #fff;
  font-size: 8px;
`;

const Pointer = styled.svg`
  position: absolute;
  top: 84px;
  right: 145px;
  width: 8px;
  height: 12px;
`;

const CursorArrow = () => (
  <Pointer viewBox="0 0 8 12" aria-hidden="true">
    <path d="M1 .8V9.5L3 7.8 4.5 11 6 10.3 4.6 7.2H7.3Z" fill="#fff" stroke="#222" strokeWidth=".8" />
  </Pointer>
);

export default function App() {
  return (
    <Page>
      <Global />
      <TitleBar>
        <Icon n="mech" />
        <TitleText>A : Static Structural - Mechanical [ANSYS Mechanical Enterprise]</TitleText>
        {["min", "restore", "close"].map((n) => (
          <WindowButton key={n} type="button" aria-label={n}>
            <Icon n={n} s={10} />
          </WindowButton>
        ))}
      </TitleBar>
      <Bars>
        <Bar>
          <Grip $w={7} />
          <Txt w={20}>File</Txt>
          <Txt w={22}>Edit</Txt>
          <Txt w={26}>View</Txt>
          <Txt w={26}>Units</Txt>
          <Txt w={29}>Tools</Txt>
          <Txt w={24}>Help</Txt>
          <Grip $w={6} />
          <Grip $w={2} />
          <Ic n="console" />
          <Ic n="ok" />
          <Ic n="nodes" />
          <Grip $w={8} />
          <Txt n="bolt" w={37}>Solve</Txt>
          <Gap $w={2} />
          <Drop w={12} />
          <Gap $w={1} />
          <Txt n="analysis" w={64}>New Analysis</Txt>
          <Drop w={14} />
          <Gap $w={1} />
          <Txt n="errors" w={66}>Show Errors</Txt>
          <Ic n="chartIn" />
          <Ic n="label" />
          <Ic n="sheetChart" />
          <Ic n="letterA" />
          <Ic n="picture" />
          <Drop w={10} />
          <Txt n="worksheet" w={61} off>Worksheet</Txt>
          <Ic n="info" />
          <Ic n="tag" />
        </Bar>
        <Bar>
          <Grip $w={3} />
          <Ic n="named" />
          <Ic n="named2" />
          <Ic n="named3" w={22} />
          <Ic n="pick" w={14} />
          <Drop w={8} />
          <Ic n="selOff" />
          <Ic n="selOff" />
          <Ic n="selOff" />
          <Ic n="bodyOff" />
          <Ic n="selBlue" />
          <Ic n="selGreen" />
          <Ic n="selTeal" />
          <Grip $w={6} />
          <Ic n="extend" w={14} />
          <Drop w={12} />
          <Grip $w={4} />
          <Ic n="rotate" on />
          <Ic n="pan" />
          <Ic n="zoomFit" />
          <Ic n="zoomIn" w={19} />
          <Grip $w={4} />
          <Ic n="zoomBox" />
          <Ic n="zoomRect" />
          <Ic n="zoomGreen" />
          <Ic n="zoomOff" />
          <Ic n="iso" />
          <Ic n="look" />
          <Ic n="box3d" />
          <Ic n="lock" />
          <Grip $w={5} />
          <Gap $w={2} />
          <Ic n="win" w={13} />
          <Drop w={10} />
        </Bar>
        <Bar>
          <Grip $w={6} />
          <Txt n="vertex" w={76}>Show Vertices</Txt>
          <Txt n="closeVertex" w={76}>Close Vertices</Txt>
          <Pick label="Scale" value="1.1 (Auto Scale)" w={95} off />
          <Gap $w={6} />
          <Txt n="wire" w={60}>Wireframe</Txt>
          <Grip $w={6} />
          <Txt n="meshOff" w={64} off>Show Mesh</Txt>
          <Ic n="axis" />
          <Gap $w={3} />
          <Txt n="random" w={51}>Random</Txt>
          <Txt n="prefs" w={65}>Preferences</Txt>
          <Grip $w={3} />
          {[1, 2, 3, 4, 5].map((i) => (
            <Ic key={i} n="coord" />
          ))}
          <Grip $w={4} />
          <Grip $w={6} />
          <Txt n="size" w={30}>Size</Txt>
          <Drop w={12} />
          <Gap $w={2} />
          <Txt n="pin" w={46}>Location</Txt>
          <Drop w={14} />
          <Txt n="convert" w={44}>Convert</Txt>
          <Drop w={14} />
          <Txt n="misc" w={68}>Miscellaneous</Txt>
          <Drop w={14} />
          <Txt n="prefs" w={60}>Tolerances</Txt>
        </Bar>
        <Bar>
          <Grip $w={6} />
          <Txt n="clip" w={53}>Clipboard</Txt>
          <Drop w={14} />
          <Txt w={34}>[ Empty ]</Txt>
        </Bar>
        <Bar>
          <Grip $w={3} />
          <Ic n="hash" />
          <Gap $w={4} />
          <Txt n="reset" w={41} off>Reset</Txt>
          <BarLabel $w={66} htmlFor="explode">Explode Factor:</BarLabel>
          <Range id="explode" type="range" defaultValue={0} />
          <Pick label="Assembly center" value="Assembly Center" w={90} off />
          <Gap $w={3} />
          <Grip $w={4} />
          <Grip $w={6} />
          <Gap $w={2} />
          <Txt n="edge" w={69}>Edge Coloring</Txt>
          <Drop w={14} />
          {[0, 1, 2, 3, 4].map((i) => (
            <React.Fragment key={i}>
              <Ic n="slash" w={14} />
              <Drop w={11} off />
            </React.Fragment>
          ))}
          <Ic n="probeArrow" />
          <Ic n="thinA" />
          <Gap $w={2} />
          <Txt n="thicken" w={50}>Thicken</Txt>
        </Bar>
        <Bar>
          <Grip $w={4} />
          <BarLabel $w={30} htmlFor="result">Result</BarLabel>
          <Pick id="result" label="Result scale" value="1.0 (True Scale)" w={90} />
          <Ic n="cubeDark" w={20} />
          <Drop w={7} />
          <Ic n="bands" w={18} />
          <Drop w={7} />
          <Ic n="contour" w={19} />
          <Drop w={7} />
          <Ic n="vectors" />
          <Grip $w={4} />
          <Ic n="max" />
          <Ic n="max" />
          <Grip $w={7} />
          <Txt n="probe" w={49} off>Probe</Txt>
          <BarLabel $w={36} htmlFor="display">Display</BarLabel>
          <Pick id="display" label="Display" value="Scoped Bodies" w={76} />
        </Bar>
      </Bars>

      <Work>
        <Side>
          <Outline />
          <Details />
        </Side>
        <Center>
          <Viewport>
            <Frame />
            <Caption>
              <p><b>A: Static Structural</b></p>
              <p>Total Deformation</p>
              <p>Type: Total Deformation</p>
              <p>Unit: mm</p>
              <p>Time: 0.78947</p>
              <p>2023/5/7 15:23</p>
            </Caption>
            <Legend>
              <Swatches>{scale.map((c) => <Swatch key={c} $c={c} />)}</Swatches>
              <LegendValues>{values.map((v) => <li key={v}>{v}</li>)}</LegendValues>
            </Legend>
            <Brand>
              <strong>ANSYS</strong>
              <span>R19.0</span>
            </Brand>
          </Viewport>
          <ViewTabs>
            <Slant d="M.5 0 5.5 10" />
            <ViewTab type="button" $w={38} $on>Geometry</ViewTab>
            <Slant d="M.5 10 5.5 0M3 5 5.5 10" />
            <ViewTab type="button" $w={44}>Print Preview</ViewTab>
            <Slant d="M.5 10 5.5 0M1 0 5.5 10" />
            <ViewTab type="button" $w={51}>Report Preview</ViewTab>
            <Slant d="M.5 10 5.5 0" />
          </ViewTabs>
          <Lower>
            <Panel>
              <Head>Graph</Head>
              <GraphBody>
                <GraphTools>
                  <Grip $w={3} />
                  <BarLabel as="span" $w={42}>Animation</BarLabel>
                  <Ic n="first" w={16} />
                  <Ic n="pause" w={16} />
                  <Ic n="stop" w={16} />
                  <Ic n="last" w={17} />
                  <Grip $w={3} />
                  <Ic n="frames" w={16} />
                  <Ic n="frames2" w={16} />
                  <Grip $w={9} />
                  <Gap $w={2} />
                  <Pick label="Frames" value="20 Frames" w={88} off />
                  <Gap $w={6} />
                  <Pick label="Duration" value="2 Sec (Auto)" w={92} border />
                  <Gap $w={6} />
                  <Grip $w={2} />
                  <Ic n="export" w={16} />
                  <Grip $w={3} />
                  <Ic n="zoomPlay" w={16} />
                  <Ic n="gridIc" w={18} />
                  <Grip $w={5} />
                  <Txt n="cycles" w={50} off>3 Cycles</Txt>
                </GraphTools>
                <Track />
                <TrackLine />
              </GraphBody>
              <LowerTabs>
                <svg width="12" height="15" viewBox="0 0 12 15" aria-hidden="true">
                  <path d="M0 0 10 14.5H12" fill="none" stroke="#aaa" />
                </svg>
                <LowerTab type="button" $w={88}>Graphics Annotations</LowerTab>
                <LowerTab type="button" $w={47}>Messages</LowerTab>
                <LowerTab type="button" $w={34} $on>Graph</LowerTab>
              </LowerTabs>
            </Panel>
            <Panel>
              <Head>Tabular Data</Head>
              <Tabular>
                <DataTable>
                  <colgroup>
                    <col style={{ width: 13 }} />
                    <col style={{ width: 40 }} />
                    <col style={{ width: 80 }} />
                    <col style={{ width: 82 }} />
                    <col style={{ width: 76 }} />
                  </colgroup>
                  <thead>
                    <tr>
                      <ColHead />
                      <ColHead>Time [s]</ColHead>
                      {columns.map((c) => (
                        <ColHead key={c.name} $c={c.c}>
                          <label><Tick type="checkbox" defaultChecked />{c.name}</label>
                        </ColHead>
                      ))}
                    </tr>
                  </thead>
                  <tbody>
                    <tr>
                      <td>1</td>
                      <td>1.</td>
                      {columns.map((c) => <td key={c.name}>{c.v}</td>)}
                    </tr>
                  </tbody>
                </DataTable>
              </Tabular>
            </Panel>
          </Lower>
        </Center>
      </Work>

      <Status>
        <StatusCell />
        <StatusCell />
        <StatusCell><Icon n="message" />1 Message</StatusCell>
        <StatusCell>No Selection</StatusCell>
        <Units>
          <span>Metric (mm, kg, N, s, mV, mA)</span>
          <span>Degrees</span>
          <span>rad/s</span>
          <span>Celsius</span>
        </Units>
        <svg width="15" height="15" viewBox="0 0 15 15" aria-hidden="true">
          <path d="M6 14 14 6M9 14 14 9M12 14 14 12" stroke="#999" strokeWidth=".9" />
        </svg>
      </Status>

      <Taskbar>
        <TaskButton type="button" aria-label="Start"><Icon n="start" s={12} /></TaskButton>
        <SearchBox>
          <Icon n="search" />
          <input aria-label="搜索" placeholder="搜索" />
          <Accordion />
        </SearchBox>
        <TaskButton type="button" aria-label="Task view"><Icon n="taskview" s={12} /></TaskButton>
        <TaskButton type="button" aria-label="Snip" $w={35}><Icon n="snip" s={16} /></TaskButton>
        <TaskButton type="button" aria-label="Edge" $w={32} $run><Icon n="edgeApp" s={16} /></TaskButton>
        <TaskButton type="button" aria-label="Firefox"><Icon n="firefox" s={15} /></TaskButton>
        <TaskButton type="button" aria-label="ANSYS" $run><Icon n="ansysApp" s={16} /></TaskButton>
        <TaskButton type="button" aria-label="Mechanical" $run><Icon n="mech" s={17} /></TaskButton>
        <TaskButton type="button" aria-label="Evernote" $run><Icon n="evernote" s={16} /></TaskButton>
        <Spacer />
        <Weather type="button"><Icon n="weather" s={14} />气温上升</Weather>
        <Gap $w={2} />
        {["up", "battery", "wifi", "sound", "mic"].map((n) => (
          <TaskButton key={n} type="button" aria-label={n} $w={16}><Icon n={n} s={12} /></TaskButton>
        ))}
        <InputMode type="button" $w={16}>英</InputMode>
        <Clock><span>15:23</span><span>2023/5/7</span></Clock>
        <Notify type="button" aria-label="Notifications" $w={38}>
          <Icon n="notes" s={12} />
          <Count>1</Count>
        </Notify>
      </Taskbar>

      <Recorder>00:00</Recorder>
      <CursorArrow />
    </Page>
  );
}
